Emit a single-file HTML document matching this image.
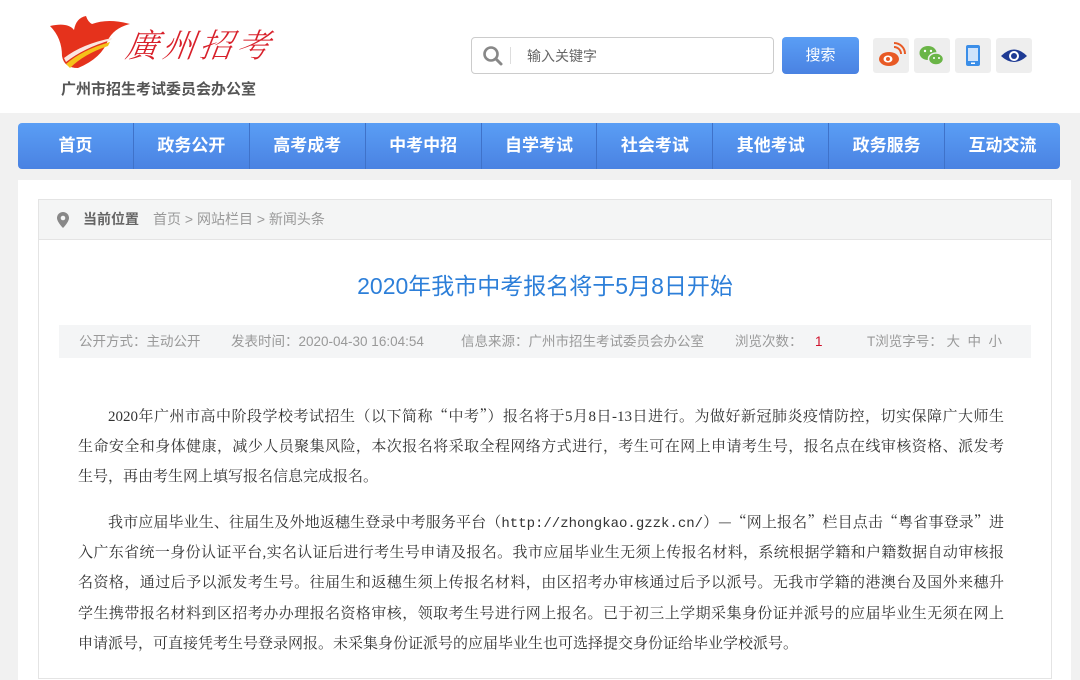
<!DOCTYPE html>
<html><head><meta charset="utf-8"><style>
*{margin:0;padding:0;box-sizing:border-box}
body{width:1080px;height:672px;overflow:hidden;background:#f1f1f1;font-family:"Liberation Sans","Noto Sans CJK SC",sans-serif;position:relative}
.hdr{position:absolute;left:0;top:0;width:1080px;height:113px;background:#fff}
.abs{position:absolute}
.nav{position:absolute;left:18px;top:123px;width:1042px;height:46px;border-radius:4px;background:linear-gradient(#5a9ef5,#4a82e2);display:flex}
.nav div{flex:1;color:#fff;font-size:17px;font-weight:bold;text-align:center;line-height:46px;border-left:1px solid #3f72c9}
.nav div:first-child{border-left:none}
.panel{position:absolute;left:18px;top:180px;width:1053px;height:500px;background:#fff}
.box{position:absolute;left:38px;top:199px;width:1014px;height:480px;border:1px solid #e4e4e4}
.bc{position:absolute;left:38px;top:199px;width:1014px;height:41px;background:#f4f5f5;border:1px solid #e4e4e4;font-size:14px;color:#999;line-height:39px}
.meta{position:absolute;left:59px;top:325px;width:972px;height:33px;background:#f4f5f6;font-size:13.5px;color:#999;line-height:33px}
.meta span{position:absolute}
.txt{position:absolute;left:78px;width:926px;font-family:"Liberation Serif","Noto Serif CJK SC",serif;font-size:15px;color:#333}
.txt div{height:30.5px;line-height:30.5px;text-align:justify;text-align-last:justify;white-space:nowrap}
.txt div.l{text-align-last:left}
.m{font-family:"Liberation Mono",monospace;font-size:14px}
.q{font-family:"Noto Serif CJK SC",serif}
.ic{position:absolute;top:38px;width:36px;height:35px;background:#eee;border-radius:3px}
</style></head><body>
<div class="hdr"></div>
<svg class="abs" style="left:48px;top:12px" width="90" height="60" viewBox="0 0 90 60">
<path d="M2 14 Q20 10 26 18 Q28 6 38 4 Q40 10 44 12 Q60 6 82 12 Q66 16 60 28 Q54 46 30 56 Q16 56 14 44 Q14 26 2 14Z" fill="#e5321c"/>
<path d="M18 52 Q34 38 62 30 L60 34 Q36 42 22 56Z" fill="#f5c21a"/>
<path d="M16 46 Q34 32 64 26 L63 28 Q36 36 18 50Z" fill="#fbe6e0"/>
</svg>
<div class="abs" style="left:126px;top:20px;font-family:'Liberation Serif','Noto Serif CJK SC',serif;font-style:italic;color:#d8202a;font-size:33px;letter-spacing:4px;font-weight:300;transform:skewX(-8deg)">廣州招考</div>
<div class="abs" style="left:61px;top:78px;font-size:15px;font-weight:bold;color:#555">广州市招生考试委员会办公室</div>
<div class="abs" style="left:471px;top:37px;width:303px;height:37px;border:1px solid #ccc;border-radius:4px;background:#fff"></div>
<svg class="abs" style="left:482px;top:45px" width="22" height="22" viewBox="0 0 22 22"><circle cx="9" cy="9" r="6.5" fill="none" stroke="#888" stroke-width="2.6"/><path d="M14 14l5 5" stroke="#888" stroke-width="3" stroke-linecap="round"/></svg>
<div class="abs" style="left:510px;top:47px;width:1px;height:17px;background:#ddd"></div>
<div class="abs" style="left:527px;top:46px;font-size:14px;color:#666">输入关键字</div>
<div class="abs" style="left:782px;top:37px;width:77px;height:37px;border-radius:4px;background:linear-gradient(#5a9ef5,#4a82e2);color:#fff;font-size:15px;text-align:center;line-height:37px">搜索</div>
<div class="ic" style="left:873px"><svg width="36" height="35" viewBox="0 0 36 35"><ellipse cx="16" cy="21" rx="10" ry="7" fill="#e85a25"/><ellipse cx="15" cy="21" rx="4.5" ry="3.5" fill="#fff"/><circle cx="15" cy="21" r="2" fill="#e85a25"/><path d="M21 9a7 7 0 0 1 7 7M21 5a11 11 0 0 1 11 11" stroke="#e85a25" stroke-width="2" fill="none"/></svg></div>
<div class="ic" style="left:914px"><svg width="36" height="35" viewBox="0 0 36 35"><ellipse cx="14" cy="15" rx="8.5" ry="7" fill="#6ab547"/><ellipse cx="22" cy="21" rx="7.5" ry="6" fill="#6ab547" stroke="#eee" stroke-width="1.5"/><circle cx="11" cy="13" r="1.2" fill="#fff"/><circle cx="17" cy="13" r="1.2" fill="#fff"/><circle cx="20" cy="20" r="1" fill="#fff"/><circle cx="25" cy="20" r="1" fill="#fff"/></svg></div>
<div class="ic" style="left:955px"><svg width="36" height="35" viewBox="0 0 36 35"><rect x="11" y="7" width="14" height="21" rx="2" fill="#3b8ee8"/><rect x="13" y="10" width="10" height="13" fill="#cfe3fb"/><rect x="16" y="24.5" width="4" height="1.5" fill="#fff"/></svg></div>
<div class="ic" style="left:996px"><svg width="36" height="35" viewBox="0 0 36 35"><path d="M5 18Q18 5 31 18Q18 30 5 18Z" fill="#1e3a94"/><circle cx="18" cy="18" r="5" fill="#fff"/><circle cx="18" cy="18" r="3" fill="#1e3a94"/></svg></div>
<div class="nav"><div>首页</div><div>政务公开</div><div>高考成考</div><div>中考中招</div><div>自学考试</div><div>社会考试</div><div>其他考试</div><div>政务服务</div><div>互动交流</div></div>
<div class="panel"></div>
<div class="box"></div>
<div class="bc"><svg class="abs" style="left:17px;top:11px" width="14" height="18" viewBox="0 0 14 18"><path d="M7 1a6 6 0 0 0-6 6c0 4 6 10 6 10s6-6 6-10a6 6 0 0 0-6-6z" fill="#888"/><circle cx="7" cy="7" r="2.3" fill="#f4f5f5"/></svg><span class="abs" style="left:44px;font-weight:bold;color:#666">当前位置</span><span class="abs" style="left:114px">首页 &gt; 网站栏目 &gt; 新闻头条</span></div>
<div class="abs" style="left:0;width:1090px;text-align:center;top:267px;font-size:23px;color:#2d7fd9">2020年我市中考报名将于5月8日开始</div>
<div class="meta"><span style="left:20px">公开方式：主动公开</span><span style="left:172px">发表时间：2020-04-30 16:04:54</span><span style="left:402px">信息来源：广州市招生考试委员会办公室</span><span style="left:676px">浏览次数：</span><span style="left:756px;color:#d0102a">1</span><span style="left:808px">T浏览字号：&nbsp;大&nbsp;&nbsp;中&nbsp;&nbsp;小</span></div>
<div class="txt" style="top:401px">
<div style="padding-left:30px">2020年广州市高中阶段学校考试招生（以下简称<span class="q">“</span>中考<span class="q">”</span>）报名将于5月8日-13日进行。为做好新冠肺炎疫情防控，切实保障广大师生</div>
<div>生命安全和身体健康，减少人员聚集风险，本次报名将采取全程网络方式进行，考生可在网上申请考生号，报名点在线审核资格、派发考</div>
<div class="l">生号，再由考生网上填写报名信息完成报名。</div>
</div>
<div class="txt" style="top:507px">
<div style="padding-left:30px">我市应届毕业生、往届生及外地返穗生登录中考服务平台（<span class="m">http://zhongkao.gzzk.cn/</span>）<span class="q">—“</span>网上报名<span class="q">”</span>栏目点击<span class="q">“</span>粤省事登录<span class="q">”</span>进</div>
<div>入广东省统一身份认证平台,实名认证后进行考生号申请及报名。我市应届毕业生无须上传报名材料，系统根据学籍和户籍数据自动审核报</div>
<div>名资格，通过后予以派发考生号。往届生和返穗生须上传报名材料，由区招考办审核通过后予以派号。无我市学籍的港澳台及国外来穗升</div>
<div>学生携带报名材料到区招考办办理报名资格审核，领取考生号进行网上报名。已于初三上学期采集身份证并派号的应届毕业生无须在网上</div>
<div class="l">申请派号，可直接凭考生号登录网报。未采集身份证派号的应届毕业生也可选择提交身份证给毕业学校派号。</div>
</div>
</body></html>
